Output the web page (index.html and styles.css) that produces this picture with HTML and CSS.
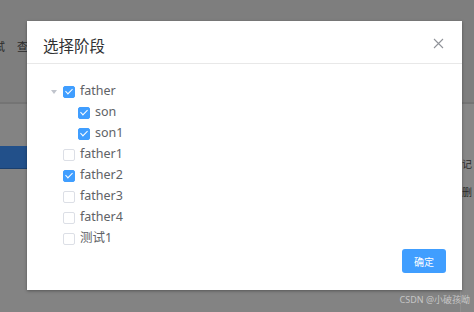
FILE: index.html
```html
<!DOCTYPE html>
<html lang="zh">
<head>
<meta charset="utf-8">
<link rel="stylesheet" href="styles.css">
</head>
<body>
<div class="page">
  <div class="topbar">
    <span class="crumb first">试</span>
    <span class="crumb">查看</span>
  </div>
  <div class="main">
    <aside class="side">
      <div class="side-item"></div>
      <div class="side-item active"></div>
    </aside>
    <div class="content">
      <div class="ops">
        <span class="op">记</span>
        <span class="op">删</span>
      </div>
    </div>
  </div>
  <div class="watermark">CSDN @小破孩呦</div>
</div>

<div class="dialog">
  <div class="dlg-head">
    <span class="dlg-title">选择阶段</span>
    <svg class="dlg-close" width="11" height="11" viewBox="0 0 11 11"><path d="M1 1L10 10M10 1L1 10" stroke="#909399" stroke-width="1.1" fill="none"/></svg>
  </div>
  <div class="dlg-body">
    <div class="tree">
      <div class="node">
        <span class="arrow open"></span><span class="cb on"></span><span class="label">father</span>
      </div>
      <div class="node child">
        <span class="arrow leaf"></span><span class="cb on"></span><span class="label">son</span>
      </div>
      <div class="node child">
        <span class="arrow leaf"></span><span class="cb on"></span><span class="label">son1</span>
      </div>
      <div class="node">
        <span class="arrow leaf"></span><span class="cb"></span><span class="label">father1</span>
      </div>
      <div class="node">
        <span class="arrow leaf"></span><span class="cb on"></span><span class="label">father2</span>
      </div>
      <div class="node">
        <span class="arrow leaf"></span><span class="cb"></span><span class="label">father3</span>
      </div>
      <div class="node">
        <span class="arrow leaf"></span><span class="cb"></span><span class="label">father4</span>
      </div>
      <div class="node">
        <span class="arrow leaf"></span><span class="cb"></span><span class="label">测试1</span>
      </div>
    </div>
  </div>
  <div class="dlg-foot">
    <button class="btn-primary">确定</button>
  </div>
</div>
</body>
</html>
```

FILE: styles.css
```css
* { box-sizing: border-box; }
html, body { margin: 0; padding: 0; }
body {
  width: 474px;
  height: 312px;
  overflow: hidden;
  font-family: "Noto Sans", "Noto Sans CJK SC", sans-serif;
  background: #838383;
}
.page {
  position: relative;
  width: 474px;
  height: 312px;
  display: flex;
  flex-direction: column;
}
.topbar {
  height: 104px;
  background: #7e7e7e;
  border-bottom: 2px solid #747474;
  display: flex;
  align-items: flex-start;
  gap: 12px;
  padding-top: 38px;
  font-size: 11px;
  color: #2b2b2b;
}
.crumb.first { margin-left: -6px; }
.main {
  flex: 1;
  display: flex;
}
.side {
  width: 60px;
  display: flex;
  flex-direction: column;
  padding-top: 42px;
}
.side-item { height: 0; }
.side-item.active {
  height: 23px;
  background: #22508a;
  border-bottom: 1px solid #1a3f6e;
}
.content {
  flex: 1;
  display: flex;
  justify-content: flex-end;
}
.ops {
  width: 14px;
  background: #878787;
  border-left: 1px solid #8f8f8f;
  display: flex;
  flex-direction: column;
  padding-top: 52px;
  gap: 12px;
  font-size: 10px;
  color: #2a2a2a;
}
.op { display: block; height: 16px; line-height: 16px; padding-left: 1px; }
.watermark {
  position: absolute;
  right: 4px;
  bottom: 6px;
  font-size: 9px;
  color: rgba(255,255,255,0.55);
  font-family: "Noto Sans", "Noto Sans CJK SC", sans-serif;
}

.dialog {
  position: absolute;
  left: 27px;
  top: 21px;
  width: 435px;
  height: 269px;
  background: #fff;
  box-shadow: 0 1px 3px rgba(0,0,0,0.35);
  display: flex;
  flex-direction: column;
}
.dlg-head {
  height: 44px;
  border-bottom: 1px solid #e8e8e8;
  display: flex;
  align-items: center;
  justify-content: space-between;
  padding: 3px 18px 0 16px;
}
.dlg-title {
  font-size: 15.5px;
  color: #303133;
  line-height: 1;
  padding-top: 6px;
}
.dlg-close { margin-top: 0; }
.dlg-body {
  flex: 1;
  padding: 17px 16px 0 22px;
}
.tree { display: flex; flex-direction: column; }
.node {
  height: 21px;
  display: flex;
  align-items: center;
}
.node.child { padding-left: 15px; }
.arrow {
  width: 14px;
  height: 10px;
  display: inline-block;
  position: relative;
}
.arrow.open::after {
  content: "";
  position: absolute;
  left: 2px;
  top: 3px;
  border-left: 3px solid transparent;
  border-right: 3px solid transparent;
  border-top: 4px solid #c0c4cc;
}
.cb {
  width: 12px;
  height: 12px;
  border: 1px solid #dcdfe6;
  border-radius: 2px;
  background: #fff;
  position: relative;
  margin-right: 5px;
  flex: none;
}
.cb.on {
  background: #409eff;
  border-color: #409eff;
}
.cb.on::after {
  content: "";
  position: absolute;
  left: 3px;
  top: 0.5px;
  width: 3px;
  height: 6px;
  border-right: 1.5px solid #fff;
  border-bottom: 1.5px solid #fff;
  transform: rotate(45deg);
}
.label {
  font-size: 12.5px;
  color: #606266;
  line-height: 1;
}
.dlg-foot {
  display: flex;
  justify-content: flex-end;
  padding: 0 16px 17px;
}
.btn-primary {
  width: 44px;
  height: 24px;
  border: none;
  border-radius: 3px;
  background: #409eff;
  color: #fff;
  font-size: 10px;
  font-family: "Noto Sans CJK SC", sans-serif;
  padding: 0;
}
```
